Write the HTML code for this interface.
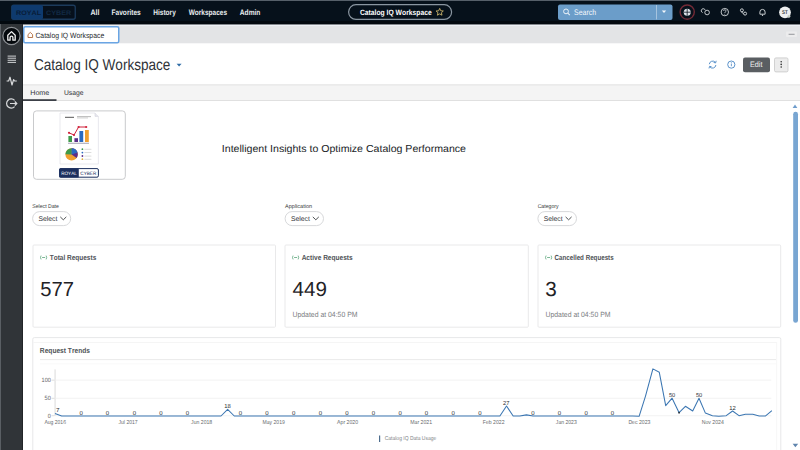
<!DOCTYPE html>
<html><head><meta charset="utf-8"><title>Catalog IQ Workspace</title>
<style>
html,body{margin:0;padding:0;width:800px;height:450px;overflow:hidden;background:#fff}
svg{display:block;font-family:"Liberation Sans",sans-serif;font-kerning:none}
</style></head><body>
<svg width="800" height="450" viewBox="0 0 800 450" text-rendering="geometricPrecision">
<rect x="0" y="0" width="800" height="450" fill="#ffffff"/>
<rect x="0" y="0" width="800" height="24.7" fill="#06111b"/>
<rect x="0" y="21" width="800" height="3.7" fill="#03090f"/>
<rect x="0" y="0" width="800" height="1" fill="#56606a"/>
<rect x="0" y="24" width="23" height="426" fill="#303438"/>
<rect x="0" y="24" width="1" height="426" fill="#5a5f64"/>
<rect x="22" y="24" width="1" height="426" fill="#222528"/>
<rect x="23" y="24.7" width="777" height="18.6" fill="#e3e4e6"/>
<rect x="23" y="24.7" width="777" height="1.3" fill="#eef1f5"/>
<rect x="23.75" y="26.75" width="95" height="16" rx="1.5" fill="#ffffff" stroke="#6aa5e4" stroke-width="1.5"/>
<rect x="786" y="31.6" width="11" height="5.4" rx="1" fill="#ececed"/>
<rect x="788.6" y="33.8" width="6" height="0.9" fill="#8a8e92"/>
<rect x="11.75" y="5.25" width="63.5" height="14" rx="2" fill="#06101c" stroke="#1c3b5c" stroke-width="1.3"/>
<rect x="11.5" y="5" width="31.5" height="14.5" rx="2" fill="#0e3a6e"/>
<text x="16.12" y="14.60" font-size="6.54" fill="#081c38" font-weight="bold" textLength="25.00" lengthAdjust="spacingAndGlyphs">ROYAL</text>
<text x="46.01" y="14.60" font-size="6.54" fill="#122a44" font-weight="bold" textLength="25.14" lengthAdjust="spacingAndGlyphs">CYBER</text>
<text x="90.43" y="15.00" font-size="7.85" fill="#e8ecef" font-weight="bold" textLength="8.97" lengthAdjust="spacingAndGlyphs">All</text>
<text x="111.56" y="15.00" font-size="7.85" fill="#e8ecef" font-weight="bold" textLength="29.21" lengthAdjust="spacingAndGlyphs">Favorites</text>
<text x="153.31" y="15.00" font-size="7.85" fill="#e8ecef" font-weight="bold" textLength="22.47" lengthAdjust="spacingAndGlyphs">History</text>
<text x="188.74" y="15.00" font-size="7.85" fill="#e8ecef" font-weight="bold" textLength="38.27" lengthAdjust="spacingAndGlyphs">Workspaces</text>
<text x="239.84" y="15.00" font-size="7.85" fill="#e8ecef" font-weight="bold" textLength="20.57" lengthAdjust="spacingAndGlyphs">Admin</text>
<rect x="348.6" y="4.7" width="103" height="14.7" rx="7.35" fill="none" stroke="#8a96a1" stroke-width="1.2"/>
<text x="359.92" y="14.90" font-size="7.70" fill="#ffffff" font-weight="bold" textLength="71.81" lengthAdjust="spacingAndGlyphs">Catalog IQ Workspace</text>
<path d="M439.7 8.4 L440.8 10.8 L443.3 11 L441.4 12.7 L442 15.2 L439.7 13.9 L437.4 15.2 L438 12.7 L436.1 11 L438.6 10.8 Z" fill="none" stroke="#c9b36a" stroke-width="0.9" stroke-linejoin="round"/>
<rect x="558" y="4.4" width="114.5" height="15.6" rx="2" fill="#6b9dc9"/>
<rect x="656" y="5" width="1" height="14.4" fill="#a6c4df"/>
<circle cx="566" cy="11.4" r="2.4" fill="none" stroke="#eaf2f9" stroke-width="1"/>
<path d="M567.8 13.2 L569.8 15.2" stroke="#eaf2f9" stroke-width="1.1"/>
<text x="574.09" y="15.00" font-size="8.14" fill="#f3f7fb" font-weight="normal" textLength="21.97" lengthAdjust="spacingAndGlyphs">Search</text>
<path d="M661.8 10.6 L666.2 10.6 L664 13 Z" fill="#f3f7fb"/>
<circle cx="687.2" cy="12.1" r="7.1" fill="none" stroke="#742a36" stroke-width="1.4"/>
<circle cx="687.2" cy="12.2" r="3.5" fill="#dfe4ea"/>
<path d="M683.7 12.2 H690.7 M687.2 8.7 V15.7" stroke="#0b1520" stroke-width="0.8"/>
<path d="M705.2 10.2 A2 2 0 1 0 702.6 12.6" fill="none" stroke="#d6dadd" stroke-width="0.9"/>
<circle cx="707.1" cy="12.5" r="2.3" fill="none" stroke="#d6dadd" stroke-width="0.9"/>
<circle cx="724.8" cy="12.1" r="3.7" fill="none" stroke="#d6dadd" stroke-width="0.9"/>
<path d="M723.6 11 a1.2 1.2 0 1 1 1.6 1.1 l-0.4 0.6 v0.4" fill="none" stroke="#d6dadd" stroke-width="0.8"/>
<circle cx="724.8" cy="14.3" r="0.45" fill="#d6dadd"/>
<circle cx="741.9" cy="10.3" r="1.5" fill="none" stroke="#d6dadd" stroke-width="0.9"/>
<circle cx="745.1" cy="13.6" r="1.5" fill="none" stroke="#d6dadd" stroke-width="0.9"/>
<path d="M741.6 11.8 Q742.4 13.4 743.6 13.9" fill="none" stroke="#d6dadd" stroke-width="0.9"/>
<path d="M759.9 14.2 V12 A2.6 2.6 0 0 1 765.1 12 V14.2 Z" fill="none" stroke="#d6dadd" stroke-width="0.9" stroke-linejoin="round"/>
<circle cx="762.5" cy="15.2" r="0.7" fill="#d6dadd"/>
<circle cx="785" cy="12.3" r="5.9" fill="#eceeef"/>
<text x="782.07" y="13.80" font-size="5.52" fill="#3a3e43" font-weight="bold" textLength="5.78" lengthAdjust="spacingAndGlyphs">ST</text>
<circle cx="788.8" cy="16.2" r="1.3" fill="#b9c4b9" stroke="#eceeef" stroke-width="0.5"/>
<circle cx="11.5" cy="36" r="8.6" fill="#05090d" stroke="#8e9296" stroke-width="1.2"/>
<path d="M7.8 40.2 V35.2 L11.5 31.6 L15.2 35.2 V40.2 H12.9 V37.6 A1.4 1.4 0 0 0 10.1 37.6 V40.2 Z" fill="none" stroke="#f2f2f2" stroke-width="1.3" stroke-linejoin="round"/>
<rect x="7.6" y="55.6" width="8.4" height="1" fill="#cfd1d3"/>
<rect x="7.6" y="57.7" width="8.4" height="1" fill="#cfd1d3"/>
<rect x="7.6" y="59.8" width="8.4" height="1" fill="#cfd1d3"/>
<rect x="7.6" y="61.9" width="8.4" height="1" fill="#cfd1d3"/>
<path d="M6.6 81 H8.6 L10 77.2 L12 85 L13.6 79.6 L14.6 81 H16.8" fill="none" stroke="#d8dadc" stroke-width="1.2" stroke-linejoin="round"/>
<path d="M14.6 100.4 A4.6 4.6 0 1 0 14.6 106.6" fill="none" stroke="#d8dadc" stroke-width="1.2"/>
<path d="M10 103.5 H16.8 M14.8 101.5 L16.8 103.5 L14.8 105.5" fill="none" stroke="#d8dadc" stroke-width="1.2"/>
<path d="M28 37.5 V34.6 L30.3 32.4 L32.6 34.6 V37.5 Z" fill="none" stroke="#b06a3a" stroke-width="0.9" stroke-linejoin="round"/>
<text x="35.45" y="37.60" font-size="7.70" fill="#26292c" font-weight="normal" textLength="68.75" lengthAdjust="spacingAndGlyphs">Catalog IQ Workspace</text>
<text x="33.91" y="69.80" font-size="15.70" fill="#2f3338" font-weight="normal" textLength="136.49" lengthAdjust="spacingAndGlyphs">Catalog IQ Workspace</text>
<path d="M176.6 63.8 L181.6 63.8 L179.1 66.6 Z" fill="#2f6ca6"/>
<path d="M709.3 64.2 A3.4 3.4 0 0 1 715.2 62.2" fill="none" stroke="#4a87c4" stroke-width="0.9"/>
<path d="M715.9 65 A3.4 3.4 0 0 1 710 67" fill="none" stroke="#4a87c4" stroke-width="0.9"/>
<path d="M716.2 60.8 L715.6 62.9 L713.6 62.4" fill="none" stroke="#4a87c4" stroke-width="0.9"/>
<path d="M709 68.4 L709.6 66.3 L711.6 66.8" fill="none" stroke="#4a87c4" stroke-width="0.9"/>
<circle cx="731.3" cy="64.6" r="3.6" fill="none" stroke="#4a87c4" stroke-width="0.9"/>
<rect x="730.9" y="63.6" width="0.8" height="2.6" fill="#4a87c4"/><rect x="730.9" y="62.3" width="0.8" height="0.8" fill="#4a87c4"/>
<rect x="743" y="57.4" width="27" height="14.8" rx="2" fill="#5a5e62"/>
<text x="750.01" y="67.00" font-size="7.85" fill="#f2f2f2" font-weight="normal" textLength="12.45" lengthAdjust="spacingAndGlyphs">Edit</text>
<rect x="774.5" y="57.9" width="13.5" height="14" rx="1.5" fill="#ececec" stroke="#c8c8c8" stroke-width="0.8"/>
<circle cx="781.2" cy="61.8" r="0.8" fill="#333"/>
<circle cx="781.2" cy="64.4" r="0.8" fill="#333"/>
<circle cx="781.2" cy="67.0" r="0.8" fill="#333"/>
<rect x="23" y="84.5" width="777" height="15.5" fill="#f4f4f4"/>
<rect x="23" y="84.5" width="777" height="0.8" fill="#dedede"/>
<rect x="23" y="100" width="777" height="0.8" fill="#d9d9d9"/>
<text x="30.21" y="94.80" font-size="6.98" fill="#2c3035" font-weight="normal" textLength="19.11" lengthAdjust="spacingAndGlyphs">Home</text>
<text x="63.98" y="94.80" font-size="6.98" fill="#2c3035" font-weight="normal" textLength="19.52" lengthAdjust="spacingAndGlyphs">Usage</text>
<rect x="23" y="99.2" width="33.5" height="1.8" fill="#3c4047"/>
<path d="M792.6 108 L797.4 108 L795 104.6 Z" fill="#6e9ccc"/>
<rect x="793.2" y="111.8" width="4.8" height="211" rx="2.4" fill="#79a6d2"/>
<path d="M792.6 443.8 L798.2 443.8 L795.4 447.3 Z" fill="#5f84ad"/>
<rect x="33.5" y="110.9" width="91.8" height="68.4" rx="3" fill="#fff" stroke="#c9cacc" stroke-width="1"/>
<path d="M60 113 H95 L98.4 116.4 V164 H60 Z" fill="#fff" stroke="#e3e3ea" stroke-width="0.8"/>
<path d="M95 113 V116.4 H98.4" fill="#e8e8ee" stroke="#d5d5dd" stroke-width="0.6"/>
<rect x="65" y="116.8" width="9" height="1" fill="#555"/>
<rect x="77" y="116.4" width="14" height="0.7" fill="#999"/><rect x="77" y="117.6" width="11" height="0.7" fill="#bbb"/>
<rect x="68.4" y="136" width="3.6" height="6" fill="#3e9a4a"/>
<rect x="74.4" y="138.2" width="3.6" height="3.8" fill="#5b2e8a"/>
<rect x="79.4" y="131" width="3.8" height="11" fill="#2a6bc0"/>
<rect x="85" y="130" width="3.8" height="12" fill="#f0a030"/>
<path d="M69 132.8 L74 135 L78.6 127 L86.2 127" fill="none" stroke="#d0213a" stroke-width="1"/>
<circle cx="69.0" cy="132.8" r="1.1" fill="#d0213a"/>
<circle cx="74.0" cy="135.0" r="1.1" fill="#d0213a"/>
<circle cx="78.6" cy="127.0" r="1.1" fill="#d0213a"/>
<circle cx="86.2" cy="127.0" r="1.1" fill="#d0213a"/>
<rect x="68" y="142.8" width="21" height="0.8" fill="#8a8aa0"/>
<circle cx="71.6" cy="154.4" r="6.2" fill="#f0a030"/>
<path d="M71.6 154.4 L71.6 148.2 A6.2 6.2 0 0 1 76.6 158 Z" fill="#5b2e8a"/>
<path d="M71.6 154.4 L65.4 154.2 A6.2 6.2 0 0 1 71.6 148.2 Z" fill="#3e9a4a"/>
<path d="M71.6 154.4 L71.6 148.2 A6.2 6.2 0 0 1 77.5 152.6 Z" fill="#2a6bc0"/>
<circle cx="82.4" cy="149.2" r="0.9" fill="#3e9a4a"/>
<rect x="84.4" y="148.9" width="7" height="0.5" fill="#bbb"/>
<circle cx="82.4" cy="152.6" r="0.9" fill="#2a6bc0"/>
<rect x="84.4" y="152.3" width="7" height="0.5" fill="#bbb"/>
<circle cx="82.4" cy="156.0" r="0.9" fill="#5b2e8a"/>
<rect x="84.4" y="155.8" width="7" height="0.5" fill="#bbb"/>
<circle cx="82.4" cy="159.2" r="0.9" fill="#e0b040"/>
<rect x="84.4" y="158.9" width="7" height="0.5" fill="#bbb"/>
<rect x="59.6" y="168.6" width="38.8" height="8.6" rx="1.4" fill="#fff" stroke="#1b2f5e" stroke-width="1"/>
<rect x="59.2" y="168.2" width="19.6" height="9.4" rx="1.2" fill="#1b2f5e"/>
<text x="61.22" y="174.60" font-size="4.80" fill="#ffffff" font-weight="normal" textLength="15.53" lengthAdjust="spacingAndGlyphs">ROYAL</text>
<text x="80.37" y="174.60" font-size="4.80" fill="#1b2f5e" font-weight="normal" textLength="15.85" lengthAdjust="spacingAndGlyphs">CYBER</text>
<text x="221.82" y="151.50" font-size="10.17" fill="#202326" font-weight="normal" textLength="244.15" lengthAdjust="spacingAndGlyphs">Intelligent Insights to Optimize Catalog Performance</text>
<text x="32.37" y="208.20" font-size="5.52" fill="#3a3d40" font-weight="normal" textLength="26.46" lengthAdjust="spacingAndGlyphs">Select Date</text>
<rect x="32.60" y="211.6" width="38.10" height="14" rx="7" fill="#fff" stroke="#d2d4d6" stroke-width="0.9"/>
<text x="38.49" y="220.80" font-size="6.83" fill="#2f3236" font-weight="normal" textLength="18.86" lengthAdjust="spacingAndGlyphs">Select</text>
<path d="M60.30 216.9 L63.30 219.8 L66.30 216.9" fill="none" stroke="#3a3d40" stroke-width="0.9"/>
<text x="285.09" y="208.20" font-size="5.52" fill="#3a3d40" font-weight="normal" textLength="26.97" lengthAdjust="spacingAndGlyphs">Application</text>
<rect x="285.10" y="211.6" width="38.40" height="14" rx="7" fill="#fff" stroke="#d2d4d6" stroke-width="0.9"/>
<text x="290.99" y="220.80" font-size="6.83" fill="#2f3236" font-weight="normal" textLength="18.86" lengthAdjust="spacingAndGlyphs">Select</text>
<path d="M312.80 216.9 L315.80 219.8 L318.80 216.9" fill="none" stroke="#3a3d40" stroke-width="0.9"/>
<text x="537.64" y="208.20" font-size="5.52" fill="#3a3d40" font-weight="normal" textLength="21.07" lengthAdjust="spacingAndGlyphs">Category</text>
<rect x="537.90" y="211.6" width="38.60" height="14" rx="7" fill="#fff" stroke="#d2d4d6" stroke-width="0.9"/>
<text x="543.79" y="220.80" font-size="6.83" fill="#2f3236" font-weight="normal" textLength="18.86" lengthAdjust="spacingAndGlyphs">Select</text>
<path d="M565.60 216.9 L568.60 219.8 L571.60 216.9" fill="none" stroke="#3a3d40" stroke-width="0.9"/>
<rect x="33.00" y="245" width="242.50" height="82.2" rx="1" fill="#fff" stroke="#e6e7e8" stroke-width="0.9"/>
<path d="M41.10 255.6 q-1.2 1.9 0 3.8 M46.10 255.6 q1.2 1.9 0 3.8" fill="none" stroke="#5aa57a" stroke-width="0.8"/>
<rect x="42.10" y="257.2" width="3" height="0.8" fill="#5aa57a"/>
<text x="49.73" y="259.90" font-size="7.41" fill="#4f5357" font-weight="bold" textLength="46.54" lengthAdjust="spacingAndGlyphs">Total Requests</text>
<text x="40.19" y="296.00" font-size="20.35" fill="#1f2226" font-weight="normal" textLength="33.73" lengthAdjust="spacingAndGlyphs">577</text>
<rect x="285.00" y="245" width="243.30" height="82.2" rx="1" fill="#fff" stroke="#e6e7e8" stroke-width="0.9"/>
<path d="M293.10 255.6 q-1.2 1.9 0 3.8 M298.10 255.6 q1.2 1.9 0 3.8" fill="none" stroke="#5aa57a" stroke-width="0.8"/>
<rect x="294.10" y="257.2" width="3" height="0.8" fill="#5aa57a"/>
<text x="301.64" y="259.90" font-size="7.41" fill="#4f5357" font-weight="bold" textLength="51.03" lengthAdjust="spacingAndGlyphs">Active Requests</text>
<text x="292.53" y="296.00" font-size="20.35" fill="#1f2226" font-weight="normal" textLength="34.35" lengthAdjust="spacingAndGlyphs">449</text>
<text x="292.47" y="316.60" font-size="7.56" fill="#7a7d80" font-weight="normal" textLength="64.99" lengthAdjust="spacingAndGlyphs">Updated at 04:50 PM</text>
<rect x="538.00" y="245" width="242.70" height="82.2" rx="1" fill="#fff" stroke="#e6e7e8" stroke-width="0.9"/>
<path d="M546.10 255.6 q-1.2 1.9 0 3.8 M551.10 255.6 q1.2 1.9 0 3.8" fill="none" stroke="#5aa57a" stroke-width="0.8"/>
<rect x="547.10" y="257.2" width="3" height="0.8" fill="#5aa57a"/>
<text x="554.54" y="259.90" font-size="7.41" fill="#4f5357" font-weight="bold" textLength="59.11" lengthAdjust="spacingAndGlyphs">Cancelled Requests</text>
<text x="545.21" y="296.00" font-size="20.35" fill="#1f2226" font-weight="normal" textLength="11.50" lengthAdjust="spacingAndGlyphs">3</text>
<text x="545.47" y="316.60" font-size="7.56" fill="#7a7d80" font-weight="normal" textLength="64.99" lengthAdjust="spacingAndGlyphs">Updated at 04:50 PM</text>
<rect x="32.8" y="337.6" width="748" height="120" rx="1.5" fill="#fff" stroke="#e4e5e6" stroke-width="0.9"/>
<rect x="33.5" y="342" width="743" height="0.7" fill="#f1f1f1"/>
<rect x="776.4" y="342" width="0.7" height="108" fill="#f3f3f3"/>
<text x="39.86" y="353.10" font-size="7.41" fill="#505458" font-weight="bold" textLength="50.12" lengthAdjust="spacingAndGlyphs">Request Trends</text>
<rect x="40" y="359.2" width="736" height="0.9" fill="#e8e8e8"/>
<rect x="40" y="363.6" width="736" height="0.6" fill="#f4f4f4"/>
<rect x="54.6" y="369.4" width="0.9" height="46.6" fill="#d6d6d6"/>
<rect x="55.3" y="379.70" width="716" height="0.8" fill="#efefef"/>
<rect x="51.5" y="379.75" width="3" height="0.7" fill="#cfcfcf"/>
<text x="41.58" y="382.20" font-size="6.10" fill="#5f6265" font-weight="normal" textLength="9.24" lengthAdjust="spacingAndGlyphs">100</text>
<rect x="55.3" y="397.80" width="716" height="0.8" fill="#efefef"/>
<rect x="51.5" y="397.85" width="3" height="0.7" fill="#cfcfcf"/>
<text x="44.58" y="400.30" font-size="6.10" fill="#5f6265" font-weight="normal" textLength="6.24" lengthAdjust="spacingAndGlyphs">50</text>
<rect x="55.3" y="415.40" width="716" height="0.8" fill="#efefef"/>
<rect x="51.5" y="415.45" width="3" height="0.7" fill="#cfcfcf"/>
<text x="47.79" y="417.90" font-size="6.10" fill="#5f6265" font-weight="normal" textLength="3.02" lengthAdjust="spacingAndGlyphs">0</text>
<text x="44.49" y="424.30" font-size="5.67" fill="#6a6d70" font-weight="normal" textLength="21.43" lengthAdjust="spacingAndGlyphs">Aug 2016</text>
<text x="118.52" y="424.30" font-size="5.67" fill="#6a6d70" font-weight="normal" textLength="19.13" lengthAdjust="spacingAndGlyphs">Jul 2017</text>
<text x="191.12" y="424.30" font-size="5.67" fill="#6a6d70" font-weight="normal" textLength="21.10" lengthAdjust="spacingAndGlyphs">Jun 2018</text>
<text x="262.53" y="424.30" font-size="5.67" fill="#6a6d70" font-weight="normal" textLength="22.26" lengthAdjust="spacingAndGlyphs">May 2019</text>
<text x="337.09" y="424.30" font-size="5.67" fill="#6a6d70" font-weight="normal" textLength="21.01" lengthAdjust="spacingAndGlyphs">Apr 2020</text>
<text x="410.23" y="424.30" font-size="5.67" fill="#6a6d70" font-weight="normal" textLength="21.88" lengthAdjust="spacingAndGlyphs">Mar 2021</text>
<text x="482.83" y="424.30" font-size="5.67" fill="#6a6d70" font-weight="normal" textLength="21.68" lengthAdjust="spacingAndGlyphs">Feb 2022</text>
<text x="555.87" y="424.30" font-size="5.67" fill="#6a6d70" font-weight="normal" textLength="20.90" lengthAdjust="spacingAndGlyphs">Jan 2023</text>
<text x="628.38" y="424.30" font-size="5.67" fill="#6a6d70" font-weight="normal" textLength="22.05" lengthAdjust="spacingAndGlyphs">Dec 2023</text>
<text x="701.68" y="424.30" font-size="5.67" fill="#6a6d70" font-weight="normal" textLength="22.18" lengthAdjust="spacingAndGlyphs">Nov 2024</text>
<path d="M55.00 413.40 L61.64 416.00 L68.28 416.00 L74.92 416.00 L81.56 416.00 L88.20 416.00 L94.84 416.00 L101.48 416.00 L108.12 416.00 L114.76 416.00 L121.40 416.00 L128.04 416.00 L134.68 416.00 L141.32 416.00 L147.96 416.00 L154.60 416.00 L161.24 416.00 L167.88 416.00 L174.52 416.00 L181.16 416.00 L187.80 416.00 L194.44 416.00 L201.08 416.00 L207.72 416.00 L214.36 416.00 L221.00 416.00 L227.64 409.30 L234.28 416.00 L240.92 416.00 L247.56 416.00 L254.20 416.00 L260.84 416.00 L267.48 416.00 L274.12 416.00 L280.76 416.00 L287.40 416.00 L294.04 416.00 L300.68 416.00 L307.32 416.00 L313.96 416.00 L320.60 416.00 L327.24 416.00 L333.88 416.00 L340.52 416.00 L347.16 416.00 L353.80 416.00 L360.44 416.00 L367.08 416.00 L373.72 416.00 L380.36 416.00 L387.00 416.00 L393.64 416.00 L400.28 416.00 L406.92 416.00 L413.56 416.00 L420.20 416.00 L426.84 416.00 L433.48 416.00 L440.12 416.00 L446.76 416.00 L453.40 416.00 L460.04 416.00 L466.68 416.00 L473.32 416.00 L479.96 416.00 L486.60 416.00 L493.24 416.00 L499.88 416.00 L506.52 405.96 L513.16 416.00 L519.80 416.00 L526.44 414.88 L533.08 416.00 L539.72 416.00 L546.36 416.00 L553.00 416.00 L559.64 416.00 L566.28 416.00 L572.92 416.00 L579.56 416.00 L586.20 416.00 L592.84 416.00 L599.48 416.00 L606.12 416.00 L612.76 416.00 L619.40 416.00 L626.04 416.00 L632.68 416.00 L639.10 416.30 L645.50 396.10 L652.90 368.90 L659.30 372.30 L665.70 405.70 L672.10 398.20 L679.10 412.70 L685.40 406.30 L692.70 411.00 L699.00 398.20 L705.40 413.10 L712.40 415.70 L718.80 416.30 L726.20 415.70 L732.60 411.00 L739.00 415.70 L745.40 414.20 L752.80 414.20 L759.20 415.90 L765.60 415.90 L771.90 410.70" fill="none" stroke="#3b76b2" stroke-width="1.05" stroke-linejoin="round"/>
<text x="56.12" y="411.60" font-size="5.81" fill="#2a2d30" font-weight="normal" textLength="3.55" lengthAdjust="spacingAndGlyphs">7</text>
<text x="79.51" y="414.90" font-size="5.81" fill="#2a2d30" font-weight="normal" textLength="3.37" lengthAdjust="spacingAndGlyphs">0</text>
<text x="105.81" y="414.90" font-size="5.81" fill="#2a2d30" font-weight="normal" textLength="3.37" lengthAdjust="spacingAndGlyphs">0</text>
<text x="132.81" y="414.90" font-size="5.81" fill="#2a2d30" font-weight="normal" textLength="3.37" lengthAdjust="spacingAndGlyphs">0</text>
<text x="159.31" y="414.90" font-size="5.81" fill="#2a2d30" font-weight="normal" textLength="3.37" lengthAdjust="spacingAndGlyphs">0</text>
<text x="185.81" y="414.90" font-size="5.81" fill="#2a2d30" font-weight="normal" textLength="3.37" lengthAdjust="spacingAndGlyphs">0</text>
<text x="238.81" y="414.90" font-size="5.81" fill="#2a2d30" font-weight="normal" textLength="3.37" lengthAdjust="spacingAndGlyphs">0</text>
<text x="265.31" y="414.90" font-size="5.81" fill="#2a2d30" font-weight="normal" textLength="3.37" lengthAdjust="spacingAndGlyphs">0</text>
<text x="292.06" y="414.90" font-size="5.81" fill="#2a2d30" font-weight="normal" textLength="3.37" lengthAdjust="spacingAndGlyphs">0</text>
<text x="318.81" y="414.90" font-size="5.81" fill="#2a2d30" font-weight="normal" textLength="3.37" lengthAdjust="spacingAndGlyphs">0</text>
<text x="345.31" y="414.90" font-size="5.81" fill="#2a2d30" font-weight="normal" textLength="3.37" lengthAdjust="spacingAndGlyphs">0</text>
<text x="371.81" y="414.90" font-size="5.81" fill="#2a2d30" font-weight="normal" textLength="3.37" lengthAdjust="spacingAndGlyphs">0</text>
<text x="398.56" y="414.90" font-size="5.81" fill="#2a2d30" font-weight="normal" textLength="3.37" lengthAdjust="spacingAndGlyphs">0</text>
<text x="424.81" y="414.90" font-size="5.81" fill="#2a2d30" font-weight="normal" textLength="3.37" lengthAdjust="spacingAndGlyphs">0</text>
<text x="451.56" y="414.90" font-size="5.81" fill="#2a2d30" font-weight="normal" textLength="3.37" lengthAdjust="spacingAndGlyphs">0</text>
<text x="478.31" y="414.90" font-size="5.81" fill="#2a2d30" font-weight="normal" textLength="3.37" lengthAdjust="spacingAndGlyphs">0</text>
<text x="531.31" y="414.90" font-size="5.81" fill="#2a2d30" font-weight="normal" textLength="3.37" lengthAdjust="spacingAndGlyphs">0</text>
<text x="557.81" y="414.90" font-size="5.81" fill="#2a2d30" font-weight="normal" textLength="3.37" lengthAdjust="spacingAndGlyphs">0</text>
<text x="584.56" y="414.90" font-size="5.81" fill="#2a2d30" font-weight="normal" textLength="3.37" lengthAdjust="spacingAndGlyphs">0</text>
<text x="610.81" y="414.90" font-size="5.81" fill="#2a2d30" font-weight="normal" textLength="3.37" lengthAdjust="spacingAndGlyphs">0</text>
<text x="224.15" y="408.30" font-size="5.81" fill="#2a2d30" font-weight="normal" textLength="6.50" lengthAdjust="spacingAndGlyphs">18</text>
<text x="503.06" y="405.20" font-size="5.81" fill="#2a2d30" font-weight="normal" textLength="6.38" lengthAdjust="spacingAndGlyphs">27</text>
<text x="668.98" y="397.00" font-size="5.81" fill="#2a2d30" font-weight="normal" textLength="6.24" lengthAdjust="spacingAndGlyphs">50</text>
<text x="695.88" y="397.00" font-size="5.81" fill="#2a2d30" font-weight="normal" textLength="6.24" lengthAdjust="spacingAndGlyphs">50</text>
<text x="729.25" y="409.80" font-size="5.81" fill="#2a2d30" font-weight="normal" textLength="6.54" lengthAdjust="spacingAndGlyphs">12</text>
<circle cx="679.1" cy="412.7" r="0.9" fill="#2a2d30"/>
<rect x="379" y="435.5" width="1.2" height="6.5" fill="#4d6d8e"/>
<text x="384.75" y="440.40" font-size="5.67" fill="#85888b" font-weight="normal" textLength="51.47" lengthAdjust="spacingAndGlyphs">Catalog IQ Data Usage</text>
</svg>
</body></html>
